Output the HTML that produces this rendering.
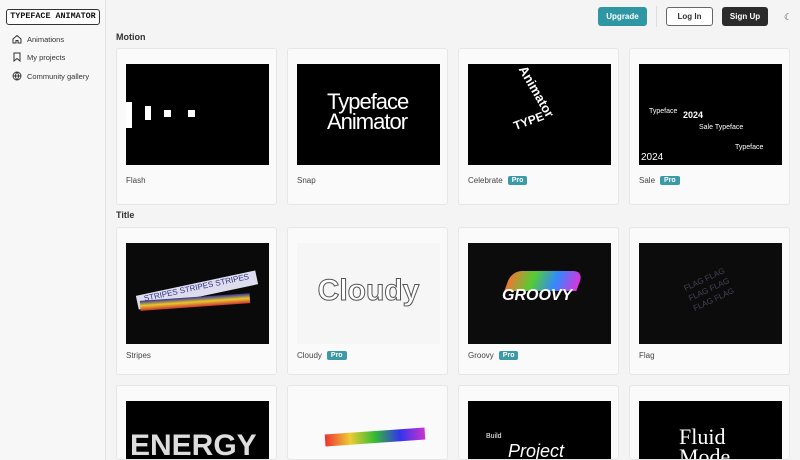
<!DOCTYPE html>
<html><head><style>
*{box-sizing:border-box;margin:0;padding:0}
html,body{width:800px;height:460px;overflow:hidden}
body{background:#f4f4f4;font-family:"Liberation Sans",sans-serif;color:#333;position:relative}
.side{position:absolute;left:0;top:0;width:106px;height:460px;background:#f7f7f7;border-right:1px solid #e4e4e4}
.logo{position:absolute;left:6px;top:9px;width:94px;height:16px;border:1.5px solid #333;border-radius:3px;font-family:"Liberation Mono",monospace;font-size:8.4px;font-weight:bold;line-height:13px;text-align:center;color:#111;background:#fff;white-space:nowrap;overflow:hidden}
.nav{position:absolute;left:12px;font-size:7.5px;color:#333;display:flex;align-items:center;gap:5px}
.nav svg{width:10px;height:10px}
.btn{position:absolute;top:7px;height:19px;border-radius:3px;font-size:8px;font-weight:bold;line-height:19px;text-align:center}
h3{position:absolute;left:116px;font-size:9px;font-weight:bold;color:#333}
.card{position:absolute;width:161px;background:#fafafa;border:1px solid #e6e6e6;border-radius:3px;overflow:hidden}
.img{position:absolute;left:9px;top:15px;width:143px;height:101px;background:#000;overflow:hidden;color:#fff}
.lbl{position:absolute;left:9px;font-size:8px;color:#444;display:flex;align-items:center;gap:5px}
.pro{background:#3b9aa6;color:#fff;font-size:7px;font-weight:bold;padding:1px 4px;border-radius:2px}
</style></head><body>
<div class="side">
<div class="logo">TYPEFACE ANIMATOR</div>
<div class="nav" style="top:34px"><svg viewBox="0 0 10 10" fill="none" stroke="#333" stroke-width="1"><path d="M1 5L5 1.5 9 5V9H6V6.5H4V9H1Z"/></svg>Animations</div>
<div class="nav" style="top:52px"><svg viewBox="0 0 10 10" fill="none" stroke="#333" stroke-width="1"><path d="M2 1H8V9L5 6.5 2 9Z"/></svg>My projects</div>
<div class="nav" style="top:71px"><svg viewBox="0 0 10 10" fill="none" stroke="#333" stroke-width="0.9"><circle cx="5" cy="5" r="4"/><path d="M1 5H9M5 1C3 3.5 3 6.5 5 9M5 1C7 3.5 7 6.5 5 9"/></svg>Community gallery</div>
</div>
<div class="btn" style="left:598px;width:49px;background:#2f97a3;color:#fff">Upgrade</div>
<div style="position:absolute;left:656px;top:6px;width:1px;height:21px;background:#ddd"></div>
<div class="btn" style="left:666px;width:47px;border:1px solid #666;background:#fff;color:#333;line-height:17px">Log In</div>
<div class="btn" style="left:722px;width:46px;background:#2b2b2b;color:#fff">Sign Up</div>
<div style="position:absolute;left:784px;top:12px;font-size:9px;color:#444">☾</div>
<h3 style="top:32px">Motion</h3>
<h3 style="top:210px">Title</h3>

<div class="card" style="left:116px;top:48px;height:157px"><div class="img">
<div style="position:absolute;left:0;top:38px;width:6px;height:26px;background:#fff"></div>
<div style="position:absolute;left:19px;top:42px;width:6px;height:14px;background:#fff"></div>
<div style="position:absolute;left:38px;top:46px;width:7px;height:7px;background:#fff"></div>
<div style="position:absolute;left:62px;top:46px;width:7px;height:7px;background:#fff"></div>
</div><div class="lbl" style="top:127px">Flash</div></div>

<div class="card" style="left:287px;top:48px;height:157px"><div class="img"><div style="position:absolute;left:30px;top:28px;font-size:22px;line-height:20px;letter-spacing:-1px">Typeface<br>Animator</div></div><div class="lbl" style="top:127px">Snap</div></div>

<div class="card" style="left:458px;top:48px;height:157px"><div class="img"><div style="position:absolute;left:40px;top:20px;font-size:13px;font-weight:bold;transform:rotate(60deg)">Animator</div><div style="position:absolute;left:45px;top:50px;font-size:12px;font-weight:bold;transform:rotate(-20deg)">TYPE</div></div><div class="lbl" style="top:127px">Celebrate <span class="pro">Pro</span></div></div>

<div class="card" style="left:629px;top:48px;height:157px"><div class="img" style="font-size:7px"><div style="position:absolute;left:10px;top:44px">Typeface</div><div style="position:absolute;left:44px;top:46px;font-size:9px;font-weight:bold">2024</div><div style="position:absolute;left:60px;top:60px">Sale Typeface</div><div style="position:absolute;left:96px;top:80px">Typeface</div><div style="position:absolute;left:2px;top:88px;font-size:10px">2024</div></div><div class="lbl" style="top:127px">Sale <span class="pro">Pro</span></div></div>

<div class="card" style="left:116px;top:227px;height:148px"><div class="img" style="background:#0a0a0a"><div style="position:absolute;left:10px;top:40px;width:122px;height:14px;background:#dde;transform:rotate(-12deg);color:#338;font-size:8px;text-align:center">STRIPES STRIPES STRIPES</div><div style="position:absolute;left:14px;top:54px;width:110px;height:10px;background:linear-gradient(#339,#e7c82a,#c33);transform:rotate(-4deg)"></div></div><div class="lbl" style="top:123px">Stripes</div></div>

<div class="card" style="left:287px;top:227px;height:148px"><div class="img" style="background:#f6f6f6;color:#fff;-webkit-text-stroke:1px #555;font-size:30px;font-weight:bold;text-align:center;line-height:95px">Cloudy</div><div class="lbl" style="top:123px">Cloudy <span class="pro">Pro</span></div></div>

<div class="card" style="left:458px;top:227px;height:148px"><div class="img" style="background:#0d0c0d"><div style="position:absolute;left:40px;top:28px;width:72px;height:20px;background:linear-gradient(90deg,#e73,#5c3,#38f,#d3d);transform:skewX(-20deg);border-radius:10px 10px 0 0"></div><div style="position:absolute;left:34px;top:44px;font-size:16px;font-weight:bold;font-style:italic">GROOVY</div></div><div class="lbl" style="top:123px">Groovy <span class="pro">Pro</span></div></div>

<div class="card" style="left:629px;top:227px;height:148px"><div class="img" style="background:#0d0c0d"><div style="position:absolute;left:48px;top:30px;color:#445;font-size:8px;line-height:11px;transform:rotate(-25deg)">FLAG FLAG<br>FLAG FLAG<br>FLAG FLAG</div></div><div class="lbl" style="top:123px">Flag</div></div>

<div class="card" style="left:116px;top:385px;height:75px"><div class="img"><div style="position:absolute;left:4px;top:28px;font-size:30px;font-weight:bold;color:#ddd">ENERGY</div></div></div>
<div class="card" style="left:287px;top:385px;height:75px"><div class="img" style="background:#fafafa"><div style="position:absolute;left:28px;top:30px;width:100px;height:12px;background:linear-gradient(90deg,#e33,#ec3,#3b3,#33e,#c3c);transform:rotate(-4deg)"></div></div></div>
<div class="card" style="left:458px;top:385px;height:75px"><div class="img" style="font-size:7px"><div style="position:absolute;left:18px;top:32px">Build</div><div style="position:absolute;left:40px;top:40px;font-size:18px;font-style:italic">Project</div></div></div>
<div class="card" style="left:629px;top:385px;height:75px"><div class="img"><div style="position:absolute;left:40px;top:26px;font-family:'Liberation Serif',serif;font-size:22px;line-height:20px">Fluid<br>Mode</div></div></div>
</body></html>
